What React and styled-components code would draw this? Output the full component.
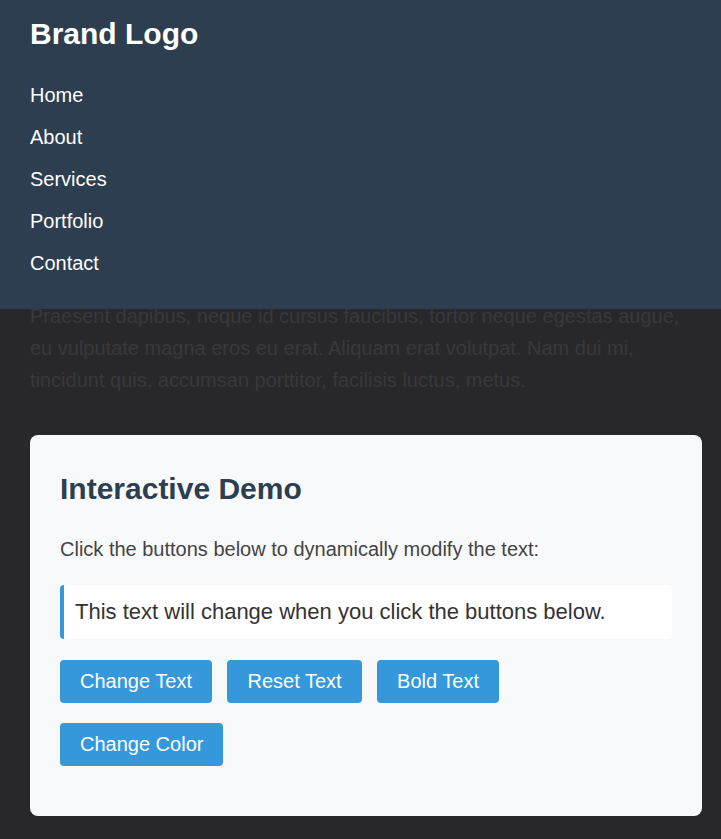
import React, { useState } from "react";
import styled, { createGlobalStyle } from "styled-components";

const GlobalStyle = createGlobalStyle`
  * {
    box-sizing: border-box;
  }
  body {
    margin: 0;
    background: #28282a;
    font-family: "Liberation Sans", Arial, sans-serif;
    line-height: 1.6;
    color: #38383b;
  }
`;

const links = ["Home", "About", "Services", "Portfolio", "Contact"];

const DEFAULT_TEXT = "This text will change when you click the buttons below.";

const App = () => {
  const [text, setText] = useState(DEFAULT_TEXT);
  const [bold, setBold] = useState(false);
  const [colored, setColored] = useState(false);

  return (
    <>
      <GlobalStyle />
      <Header>
        <Brand>Brand Logo</Brand>
        <NavList>
          {links.map((l) => (
            <NavItem key={l}>
              <NavLink href="#">{l}</NavLink>
            </NavItem>
          ))}
        </NavList>
      </Header>

      <Main>
        <Paragraph>
          Praesent dapibus, neque id cursus faucibus, tortor neque egestas
          augue, eu vulputate magna eros eu erat. Aliquam erat volutpat. Nam
          dui mi, tincidunt quis, accumsan porttitor, facilisis luctus, metus.
        </Paragraph>

        <Card>
          <CardTitle>Interactive Demo</CardTitle>
          <CardText>Click the buttons below to dynamically modify the text:</CardText>
          <DemoBox bold={bold} colored={colored}>
            {text}
          </DemoBox>
          <ButtonRow>
            <Button onClick={() => setText("The text has been changed!")}>
              Change Text
            </Button>
            <Button
              onClick={() => {
                setText(DEFAULT_TEXT);
                setBold(false);
                setColored(false);
              }}
            >
              Reset Text
            </Button>
            <Button onClick={() => setBold(!bold)}>Bold Text</Button>
            <Button onClick={() => setColored(!colored)}>Change Color</Button>
          </ButtonRow>
        </Card>
      </Main>
    </>
  );
};

export default App;

// 상단 메뉴 (펼친 상태)
const Header = styled.header`
  position: fixed;
  top: 0;
  left: 0;
  right: 0;
  height: 309px;
  padding: 10px 30px 0;
  background: #2c3e50;
  z-index: 10;
`;

const Brand = styled.div`
  font-size: 30px;
  font-weight: 700;
  line-height: 48px;
  color: #ffffff;
  margin-bottom: 16px;
`;

const NavList = styled.ul`
  list-style: none;
  margin: 0;
  padding: 0;
`;

const NavItem = styled.li`
  padding: 5px 0;
`;

const NavLink = styled.a`
  font-size: 20px;
  line-height: 32px;
  color: #ffffff;
  text-decoration: none;
`;

const Main = styled.main`
  padding: 300px 19px 0 30px;
`;

const Paragraph = styled.p`
  margin: 0;
  font-size: 20px;
  line-height: 32px;
  color: #38383b;
`;

const Card = styled.section`
  margin: 39px 0 24px;
  padding: 30px 30px 30px;
  background: #f8f9fa;
  border-radius: 8px;
`;

const CardTitle = styled.h2`
  margin: 0 0 20px;
  font-size: 30px;
  line-height: 48px;
  font-weight: 700;
  color: #2c3e50;
`;

const CardText = styled.p`
  margin: 0 0 20px;
  font-size: 20px;
  line-height: 32px;
  color: #444444;
`;

const DemoBox = styled.div`
  padding: 10px 11px;
  background: #ffffff;
  border-left: 4px solid #3498db;
  border-radius: 4px;
  font-size: 22px;
  line-height: 34px;
  font-weight: ${(props) => (props.bold ? 700 : 400)};
  color: ${(props) => (props.colored ? "#e74c3c" : "#333333")};
  margin-bottom: 21px;
`;

const ButtonRow = styled.div`
  display: flex;
  flex-wrap: wrap;
  gap: 20px 15.5px;
  padding-bottom: 20px;
`;

const Button = styled.button`
  border: 0;
  padding: 10px 20px;
  background: #3498db;
  color: #ffffff;
  font-family: "Liberation Sans", Arial, sans-serif;
  font-size: 20px;
  line-height: 23px;
  border-radius: 4px;
  cursor: pointer;
`;
